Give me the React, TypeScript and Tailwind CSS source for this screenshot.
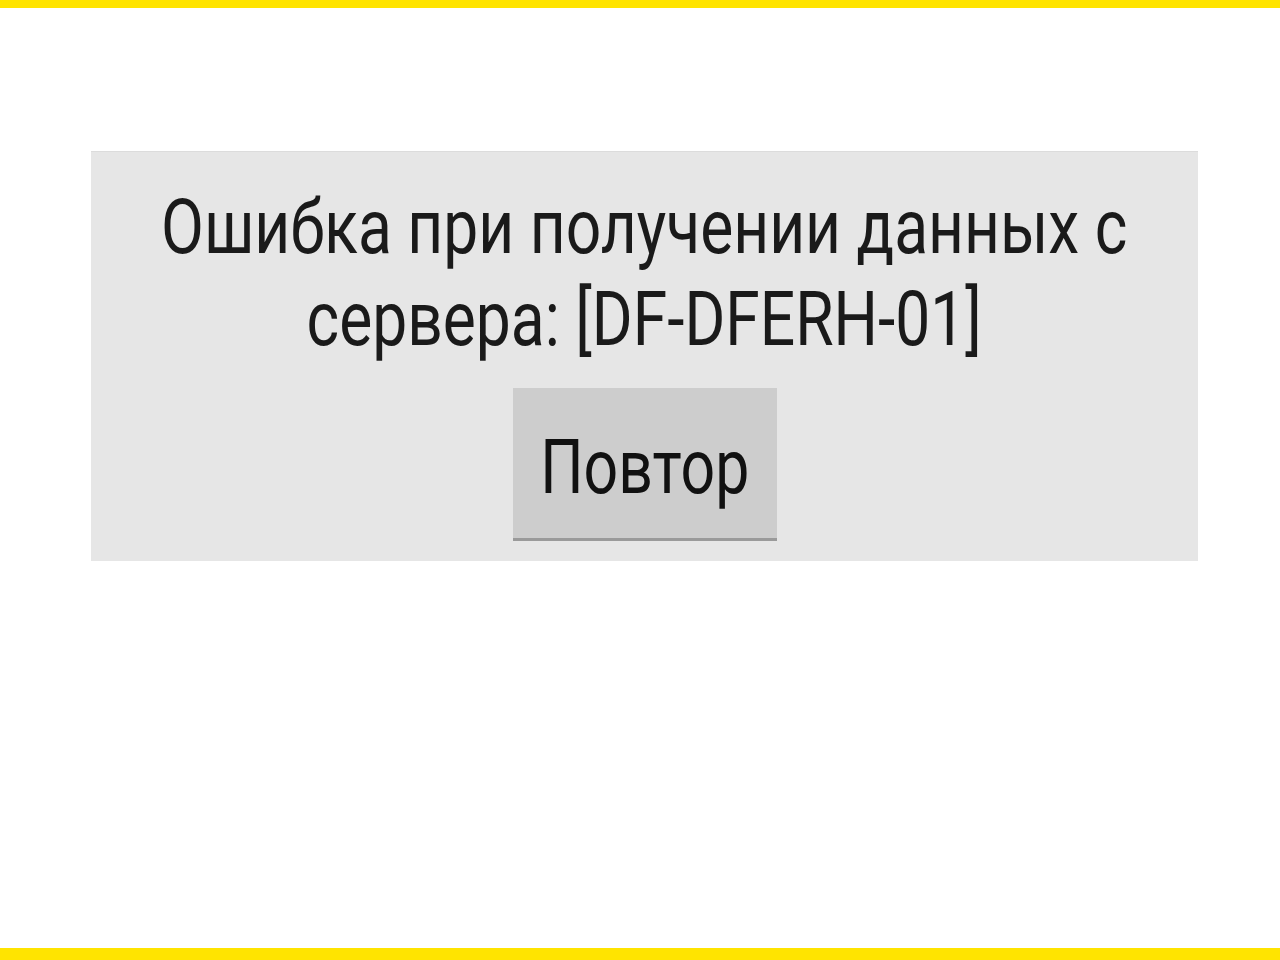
export default function App() {
  return (
    <div className="min-h-screen h-[960px] bg-white flex flex-col font-['Roboto',sans-serif]">
      <div className="h-2 bg-[#ffe400]" />

      <div className="flex-1 pt-[144px]">
        <div className="ml-[91px] w-[1107px] bg-[#e6e6e6] pt-[29px] pb-[20px] flex flex-col items-center shadow-[0_-1px_0_#dcdcdc]">
          <div className="text-[76px] leading-[92px] text-[#1a1a1a] text-center scale-x-[0.82] whitespace-nowrap">
            <p>Ошибка при получении данных с</p>
            <p>сервера: [DF-DFERH-01]</p>
          </div>

          <button className="mt-[23px] w-[264px] h-[153px] bg-[#cdcdcd] border-b-[3px] border-[#9a9a9a] pt-[33px] pb-[25px] flex justify-center">
            <span className="text-[76px] leading-[92px] text-[#111] scale-x-[0.8] whitespace-nowrap">Повтор</span>
          </button>
        </div>
      </div>

      <div className="h-3 bg-[#ffe400]" />
    </div>
  )
}
